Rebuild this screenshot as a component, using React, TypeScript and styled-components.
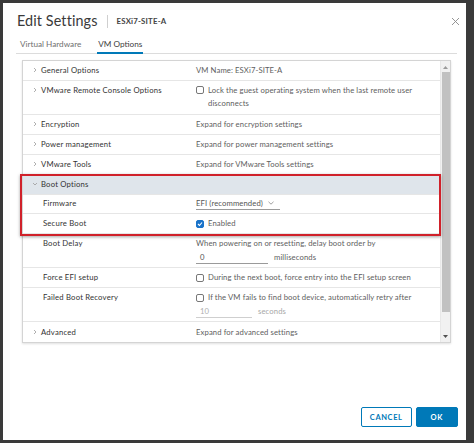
import React from 'react';
import styled, { createGlobalStyle } from 'styled-components';

const GlobalStyle = createGlobalStyle`
  html, body {
    margin: 0;
    padding: 0;
    background: #3a3a3a;
  }
  * {
    box-sizing: border-box;
  }
`;

const Frame = styled.div`
  width: 474px;
  height: 443px;
  padding: 3px 8px 3px 3px;
  background: #3a3a3a;
  font-family: Lato, 'Liberation Sans', sans-serif;
`;

const Dialog = styled.div`
  width: 463px;
  height: 437px;
  background: #fff;
  display: flex;
  flex-direction: column;
  padding-bottom: 13px;
`;

const Header = styled.div`
  height: 36px;
  display: flex;
  align-items: center;
  padding: 0 6px 0 14px;
`;

const Title = styled.div`
  font-size: 14.4px;
  font-weight: 400;
  color: #3a3a3a;
  line-height: 20px;
  letter-spacing: 0.1px;
`;

const Divider = styled.div`
  width: 1px;
  height: 13px;
  background: #cfcfcf;
  margin: 0 9px 0 9px;
`;

const Subtitle = styled.div`
  font-size: 7.8px;
  font-weight: 700;
  color: #444;
  letter-spacing: 0.2px;
`;

const CloseButton = styled.div`
  margin-left: auto;
  width: 10px;
  height: 10px;
  display: flex;
  align-items: center;
  justify-content: center;
`;

const TabBar = styled.div`
  height: 15px;
  margin: 0 9px 0 13px;
  border-bottom: 1px solid #dcdcdc;
  display: flex;
  gap: 15px;
  padding-left: 3px;
`;

const Tab = styled.div<{ $active?: boolean }>`
  height: 15px;
  padding: 0 1px;
  font-size: 8.2px;
  line-height: 11px;
  color: ${(p) => (p.$active ? '#3d3d3d' : '#707070')};
  border-bottom: 2px solid ${(p) => (p.$active ? '#0079b8' : 'transparent')};
  margin-bottom: -1px;
`;

const Panel = styled.div`
  position: relative;
  margin: 6px 15px 0 19px;
  height: 283px;
  border: 1px solid #d4d4d4;
  box-shadow: 0 1px 2px rgba(0, 0, 0, 0.12);
  display: flex;
`;

const List = styled.div`
  flex: 1;
  display: flex;
  flex-direction: column;
`;

const Row = styled.div<{ $tall?: boolean; $head?: boolean }>`
  display: grid;
  grid-template-columns: 173px 1fr;
  align-items: ${(p) => (p.$tall ? 'start' : 'center')};
  height: ${(p) => (p.$tall ? 34 : 20)}px;
  padding-top: ${(p) => (p.$tall ? 3 : 0)}px;
  border-bottom: 1px solid #e6e6e6;
  background: ${(p) => (p.$head ? '#dfe5eb' : '#fff')};
  font-size: 7.7px;
  line-height: 13px;

  &:last-child {
    border-bottom: none;
  }
`;

const Label = styled.div<{ $sub?: boolean }>`
  display: flex;
  align-items: center;
  padding-left: ${(p) => (p.$sub ? 20 : 9)}px;
  color: #333;
  font-weight: 400;
  letter-spacing: 0.2px;
`;

const Chevron = styled.span`
  width: 8px;
  height: 13px;
  margin-right: 1px;
  display: inline-flex;
  align-items: center;
`;

const Value = styled.div<{ $muted?: boolean }>`
  color: ${(p) => (p.$muted ? '#a8a8a8' : '#5e5e5e')};
  letter-spacing: 0.1px;
  padding-right: 8px;
`;

const Line = styled.div`
  display: flex;
  align-items: center;
`;

const Indent = styled.div`
  padding-left: 12px;
`;

const Box = styled.span<{ $checked?: boolean }>`
  width: 8px;
  height: 8px;
  border-radius: 2px;
  margin-right: 4px;
  flex-shrink: 0;
  border: 1px solid ${(p) => (p.$checked ? '#1a73c9' : '#777')};
  background: ${(p) => (p.$checked ? '#1a73c9' : '#fff')};
  display: inline-flex;
  align-items: center;
  justify-content: center;
`;

const Select = styled.div`
  width: 84px;
  display: flex;
  align-items: center;
  gap: 5px;
  border-bottom: 1px solid #9a9a9a;
  height: 13px;
  color: #555;
`;

const Input = styled.div<{ $w: number; $muted?: boolean }>`
  width: ${(p) => p.$w}px;
  height: 13px;
  border-bottom: 1px solid ${(p) => (p.$muted ? '#cfcfcf' : '#9a9a9a')};
  padding-left: 4px;
  margin-right: 6px;
  color: ${(p) => (p.$muted ? '#b0b0b0' : '#555')};
`;

const InputLine = styled.div`
  display: flex;
  align-items: center;
  margin-top: 1px;
`;

const Scrollbar = styled.div`
  width: 10px;
  background: #f1f1f1;
  border-left: 1px solid #e8e8e8;
  display: flex;
  flex-direction: column;
  align-items: center;
  padding: 2px 0;
`;

const ScrollArrow = styled.div`
  height: 8px;
  display: flex;
  align-items: center;
  justify-content: center;
`;

const Thumb = styled.div`
  width: 8px;
  margin: 1px 0 20px;
  flex: 1;
  background: #c1c1c1;
`;

const Highlight = styled.div`
  position: absolute;
  left: -3px;
  top: 113px;
  width: 421px;
  height: 62px;
  border: 2px solid #d0212a;
  box-shadow: 0 1px 3px rgba(0, 0, 0, 0.35);
  pointer-events: none;
`;

const Spacer = styled.div`
  flex: 1;
`;

const Footer = styled.div`
  display: flex;
  justify-content: flex-end;
  gap: 4px;
  padding-right: 8px;
`;

const Button = styled.div<{ $primary?: boolean }>`
  height: 20px;
  padding: 0 ${(p) => (p.$primary ? 14 : 8)}px;
  min-width: ${(p) => (p.$primary ? 38 : 45)}px;
  display: flex;
  align-items: center;
  justify-content: center;
  border-radius: 2px;
  border: 1px solid #0079b8;
  background: ${(p) => (p.$primary ? '#0079b8' : '#fff')};
  color: ${(p) => (p.$primary ? '#fff' : '#0079b8')};
  font-size: 7.5px;
  font-weight: 700;
  letter-spacing: 0.6px;
`;

const ChevronIcon = ({ open }: { open?: boolean }) => (
  <svg width="6" height="6" viewBox="0 0 6 6">
    <path
      d={open ? 'M1 2 L3 4 L5 2' : 'M2 1 L4 3 L2 5'}
      fill="none"
      stroke="#9a9a9a"
      strokeWidth="0.8"
    />
  </svg>
);

const Check = () => (
  <svg width="6" height="6" viewBox="0 0 6 6">
    <path d="M1 3 L2.5 4.5 L5 1.5" fill="none" stroke="#fff" strokeWidth="1.1" />
  </svg>
);

type Section = { label: string; value: string };

const topSections: Section[] = [
  { label: 'Encryption', value: 'Expand for encryption settings' },
  { label: 'Power management', value: 'Expand for power management settings' },
  { label: 'VMware Tools', value: 'Expand for VMware Tools settings' },
];

function SectionRow({ label, value, open, head }: { label: string; value?: React.ReactNode; open?: boolean; head?: boolean }) {
  return (
    <Row $head={head}>
      <Label>
        <Chevron>
          <ChevronIcon open={open} />
        </Chevron>
        {label}
      </Label>
      <Value>{value}</Value>
    </Row>
  );
}

export default function App() {
  return (
    <>
      <GlobalStyle />
      <Frame>
        <Dialog>
          <Header>
            <Title>Edit Settings</Title>
            <Divider />
            <Subtitle>ESXi7-SITE-A</Subtitle>
            <CloseButton>
              <svg width="9" height="9" viewBox="0 0 9 9">
                <path d="M1 1 L8 8 M8 1 L1 8" stroke="#8a8a8a" strokeWidth="0.9" />
              </svg>
            </CloseButton>
          </Header>

          <TabBar>
            <Tab>Virtual Hardware</Tab>
            <Tab $active>VM Options</Tab>
          </TabBar>

          <Panel>
            <List>
              <SectionRow label="General Options" value="VM Name: ESXi7-SITE-A" />
              <Row $tall>
                <Label>
                  <Chevron>
                    <ChevronIcon />
                  </Chevron>
                  VMware Remote Console Options
                </Label>
                <Value>
                  <Line>
                    <Box />
                    Lock the guest operating system when the last remote user
                  </Line>
                  <Indent>disconnects</Indent>
                </Value>
              </Row>
              {topSections.map((s) => (
                <SectionRow key={s.label} label={s.label} value={s.value} />
              ))}
              <SectionRow label="Boot Options" open head />
              <Row>
                <Label $sub>Firmware</Label>
                <Value>
                  <Select>
                    EFI (recommended)
                    <svg width="6" height="4" viewBox="0 0 6 4">
                      <path d="M0.5 0.8 L3 3.2 L5.5 0.8" fill="none" stroke="#888" strokeWidth="0.8" />
                    </svg>
                  </Select>
                </Value>
              </Row>
              <Row>
                <Label $sub>Secure Boot</Label>
                <Value>
                  <Line>
                    <Box $checked>
                      <Check />
                    </Box>
                    Enabled
                  </Line>
                </Value>
              </Row>
              <Row $tall>
                <Label $sub>Boot Delay</Label>
                <Value>
                  <div>When powering on or resetting, delay boot order by</div>
                  <InputLine>
                    <Input $w={72}>0</Input>
                    milliseconds
                  </InputLine>
                </Value>
              </Row>
              <Row>
                <Label $sub>Force EFI setup</Label>
                <Value>
                  <Line>
                    <Box />
                    During the next boot, force entry into the EFI setup screen
                  </Line>
                </Value>
              </Row>
              <Row $tall>
                <Label $sub>Failed Boot Recovery</Label>
                <Value>
                  <Line>
                    <Box />
                    If the VM fails to find boot device, automatically retry after
                  </Line>
                  <InputLine>
                    <Input $w={56} $muted>
                      10
                    </Input>
                    <Value $muted>seconds</Value>
                  </InputLine>
                </Value>
              </Row>
              <SectionRow label="Advanced" value="Expand for advanced settings" />
            </List>
            <Scrollbar>
              <ScrollArrow>
                <svg width="5" height="3" viewBox="0 0 5 3">
                  <path d="M0 3 L2.5 0 L5 3 Z" fill="#9a9a9a" />
                </svg>
              </ScrollArrow>
              <Thumb />
              <ScrollArrow>
                <svg width="5" height="3" viewBox="0 0 5 3">
                  <path d="M0 0 L2.5 3 L5 0 Z" fill="#505050" />
                </svg>
              </ScrollArrow>
            </Scrollbar>
            <Highlight />
          </Panel>

          <Spacer />
          <Footer>
            <Button>CANCEL</Button>
            <Button $primary>OK</Button>
          </Footer>
        </Dialog>
      </Frame>
    </>
  );
}
